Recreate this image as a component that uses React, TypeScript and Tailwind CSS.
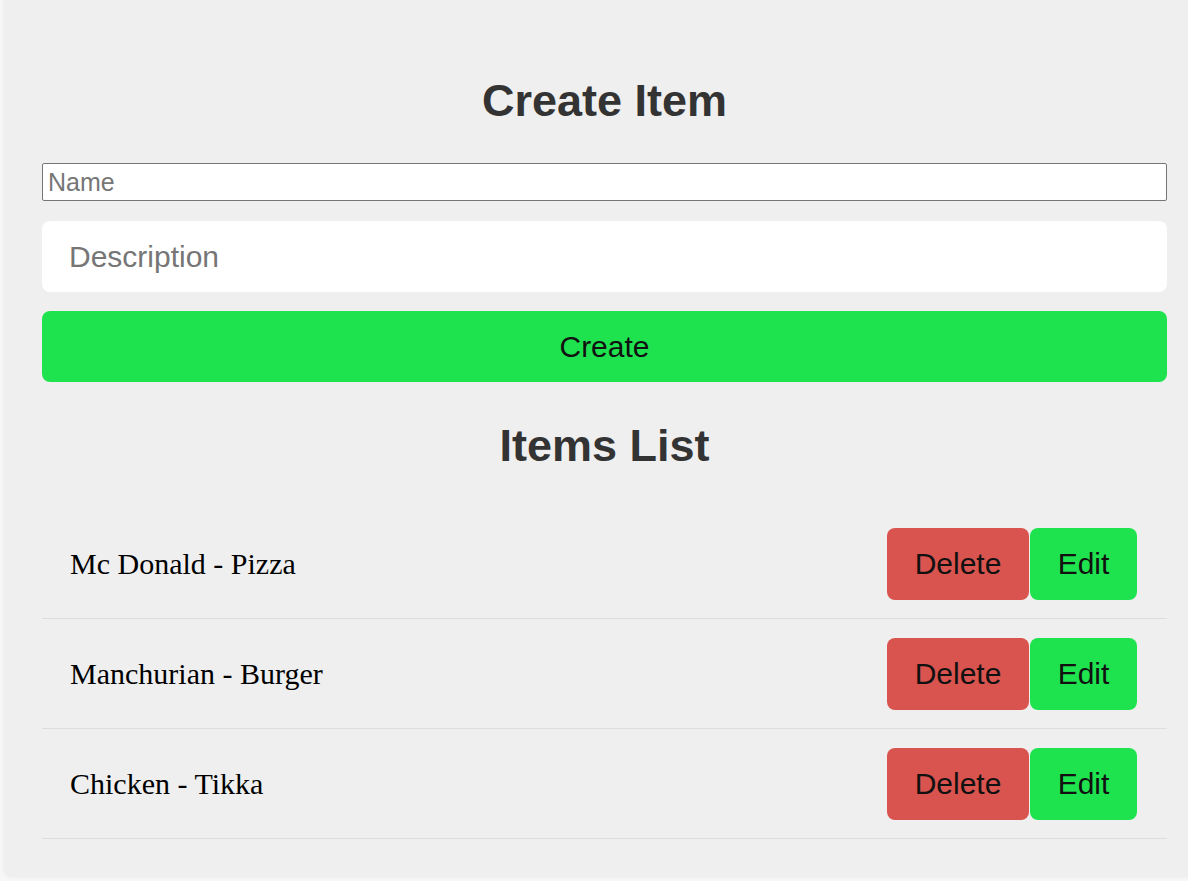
import React from "react";

const items = [
  { name: "Mc Donald", desc: "Pizza" },
  { name: "Manchurian", desc: "Burger" },
  { name: "Chicken", desc: "Tikka" },
];

export default function App() {
  return (
    <div className="w-[1188px] h-[881px] overflow-hidden bg-[#f7f7f7]">
      <div
        className="ml-[4px] w-[1201px] h-[877px] bg-[#efefef] rounded-b-[8px] shadow-[0_0_4px_rgba(0,0,0,0.06)] pt-[75px] px-[38px]"
        style={{ fontFamily: '"Liberation Sans", Arial, sans-serif' }}
      >
        <h2 className="h-[52px] leading-[52px] text-[45px] font-bold text-center text-[#333]">
          Create Item
        </h2>
        <input
          type="text"
          placeholder="Name"
          className="mt-[36px] block w-full h-[38px] bg-white border border-[#767676] rounded-[2px] pl-[5px] text-[25px] placeholder:text-[#767676] outline-none"
        />
        <input
          type="text"
          placeholder="Description"
          className="mt-[20px] block w-full h-[71px] bg-white rounded-[8px] pl-[27px] text-[30px] placeholder:text-[#767676] outline-none"
        />
        <button className="mt-[19px] block w-full h-[71px] bg-[#1ee34f] rounded-[8px] text-[30px] text-[#111]">
          Create
        </button>
        <h2 className="mt-[38px] h-[52px] leading-[52px] text-[45px] font-bold text-center text-[#333]">
          Items List
        </h2>
        <ul className="mt-[37px]">
          {items.map((it) => (
            <li
              key={it.name}
              className="h-[110px] flex items-center justify-between pl-[28px] pr-[30px] border-b border-[#dddddd]"
            >
              <span
                className="text-[30px] text-black"
                style={{ fontFamily: '"Liberation Serif", "Times New Roman", serif' }}
              >
                {it.name} - {it.desc}
              </span>
              <div className="flex">
                <button className="w-[142px] h-[72px] bg-[#d9534f] rounded-[8px] text-[30px] text-[#111]">
                  Delete
                </button>
                <button className="ml-[1px] w-[107px] h-[72px] bg-[#1ee34f] rounded-[8px] text-[30px] text-[#111]">
                  Edit
                </button>
              </div>
            </li>
          ))}
        </ul>
      </div>
    </div>
  );
}
